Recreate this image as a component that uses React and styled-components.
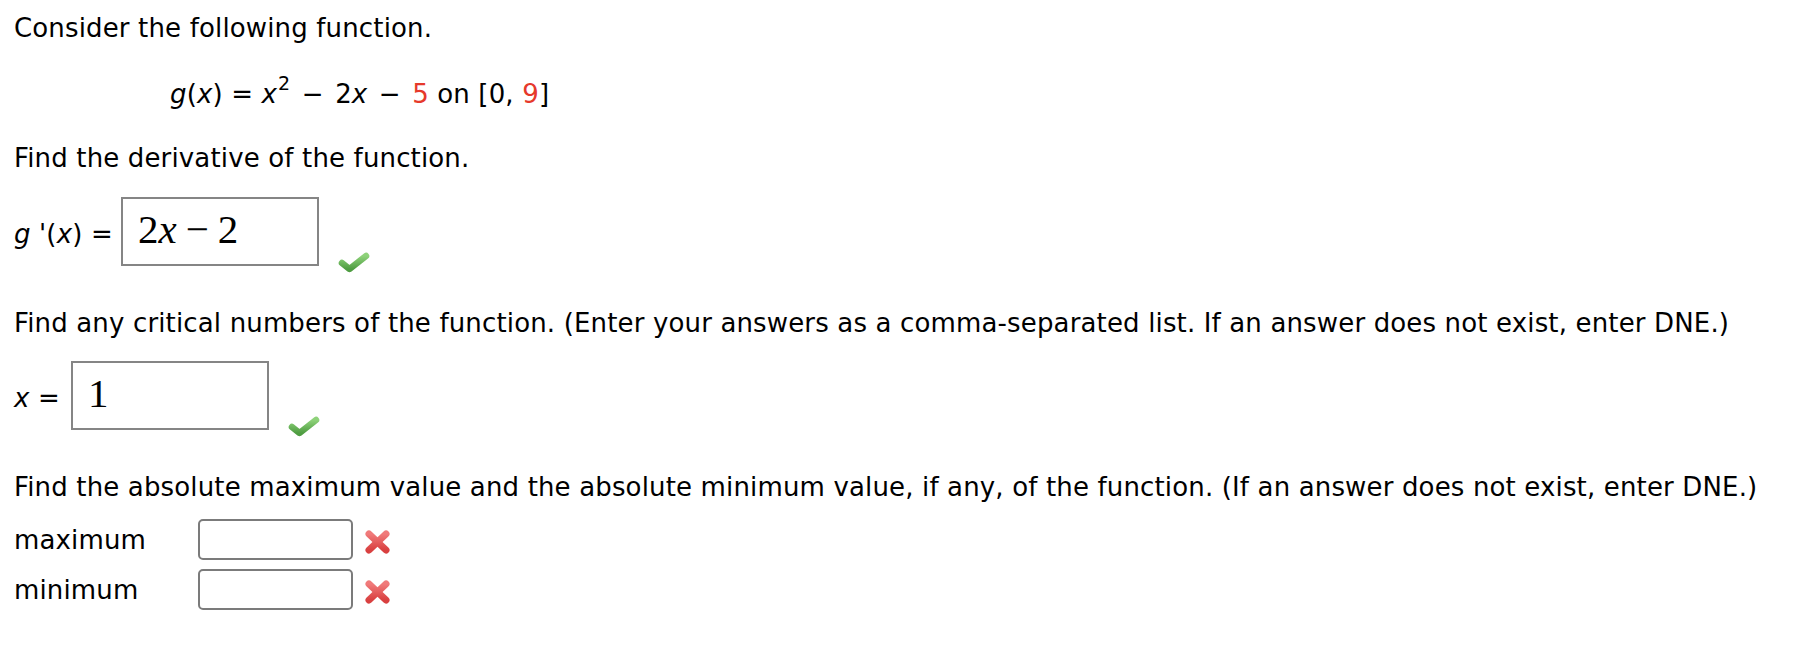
import React from 'react';
import styled, { createGlobalStyle } from 'styled-components';

const GlobalStyle = createGlobalStyle`
  html, body {
    margin: 0;
    padding: 0;
    background: #fff;
  }
`;

const Page = styled.div`
  padding: 13px 0 0 14px;
  font-family: "DejaVu Sans", Verdana, sans-serif;
  font-size: 26px;
  line-height: 30px;
  letter-spacing: 0.15px;
  color: #000;
`;

const Prompt = styled.p`
  margin: ${({ $top }) => $top || 0}px 0 0 ${({ $indent }) => $indent || 0}px;
  white-space: nowrap;
`;

const Var = styled.i`
  font-style: italic;
`;

const Red = styled.span`
  color: #e6392b;
`;

const Sup = styled.sup`
  font-size: 19px;
  line-height: 0;
  vertical-align: 13px;
  margin-left: 1px;
`;

const Minus = styled.span`
  margin: 0 3px;
`;

const AnswerRow = styled.div`
  display: flex;
  align-items: ${({ $center }) => ($center ? 'center' : 'baseline')};
  margin-top: ${({ $top }) => $top || 0}px;
  height: ${({ $height }) => $height}px;
`;

const Label = styled.span`
  flex: none;
  width: ${({ $width }) => $width}px;
  white-space: nowrap;
`;

const MathBox = styled.div`
  box-sizing: border-box;
  flex: none;
  width: ${({ $width }) => $width}px;
  height: 69px;
  padding: 8px 0 0 15px;
  border: 2px solid #858585;
  background: #fff;
  font-family: "Liberation Serif", "Times New Roman", serif;
  font-size: 41px;
  line-height: 45px;
  letter-spacing: 0;
`;

const MathVar = styled.span`
  font-style: italic;
`;

const MathOp = styled.span`
  margin: 0 9px;
`;

const Field = styled.div`
  box-sizing: border-box;
  flex: none;
  width: 155px;
  height: 41px;
  border: 2px solid #7b7b7b;
  border-radius: 5px;
  background: #fff;
`;

const Mark = styled.span`
  flex: none;
  display: block;
  line-height: 0;
  margin-left: ${({ $left }) => $left}px;
  align-self: ${({ $end }) => ($end ? 'flex-end' : 'center')};
  margin-bottom: ${({ $end }) => ($end ? -7 : 0)}px;
  margin-top: ${({ $end }) => ($end ? 0 : 4)}px;
`;

function CheckIcon() {
  return (
    <svg width="32" height="21" viewBox="0 0 32 21">
      <defs>
        <linearGradient id="chk" x1="0" y1="0" x2="0" y2="1">
          <stop offset="0" stopColor="#8ed27a" />
          <stop offset="1" stopColor="#4f9d42" />
        </linearGradient>
      </defs>
      <path
        d="M4 11 L11.5 17 L28 4"
        fill="none"
        stroke="url(#chk)"
        strokeWidth="6.5"
        strokeLinecap="round"
        strokeLinejoin="round"
      />
    </svg>
  );
}

function CrossIcon() {
  return (
    <svg width="29" height="26" viewBox="0 0 29 26">
      <defs>
        <linearGradient id="crs" x1="0" y1="0" x2="0" y2="1">
          <stop offset="0" stopColor="#f07a7a" />
          <stop offset="1" stopColor="#d94040" />
        </linearGradient>
      </defs>
      <g stroke="url(#crs)" strokeWidth="7" strokeLinecap="round" fill="none">
        <path d="M6 5 L23 21" />
        <path d="M23 5 L6 21" />
      </g>
    </svg>
  );
}

export default function App() {
  return (
    <>
      <GlobalStyle />
      <Page>
        <Prompt>Consider the following function.</Prompt>
        <Prompt $top={36} $indent={156}>
          <Var>g</Var>(<Var>x</Var>) = <Var>x</Var>
          <Sup>2</Sup> <Minus>−</Minus> 2<Var>x</Var> <Minus>−</Minus>{' '}
          <Red>5</Red> on [0, <Red>9</Red>]
        </Prompt>

        <Prompt $top={34}>Find the derivative of the function.</Prompt>
        <AnswerRow $top={24} $height={69}>
          <Label $width={107}>
            <Var>g</Var> '(<Var>x</Var>) =
          </Label>
          <MathBox $width={198}>
            2<MathVar>x</MathVar>
            <MathOp>−</MathOp>2
          </MathBox>
          <Mark $left={19} $end>
            <CheckIcon />
          </Mark>
        </AnswerRow>

        <Prompt $top={42}>
          Find any critical numbers of the function. (Enter your answers as a
          comma-separated list. If an answer does not exist, enter DNE.)
        </Prompt>
        <AnswerRow $top={23} $height={69}>
          <Label $width={57}>
            <Var>x</Var> =
          </Label>
          <MathBox $width={198}>1</MathBox>
          <Mark $left={19} $end>
            <CheckIcon />
          </Mark>
        </AnswerRow>

        <Prompt $top={42}>
          Find the absolute maximum value and the absolute minimum value, if
          any, of the function. (If an answer does not exist, enter DNE.)
        </Prompt>
        <AnswerRow $top={17} $height={41} $center>
          <Label $width={184}>maximum</Label>
          <Field />
          <Mark $left={10}>
            <CrossIcon />
          </Mark>
        </AnswerRow>
        <AnswerRow $top={9} $height={41} $center>
          <Label $width={184}>minimum</Label>
          <Field />
          <Mark $left={10}>
            <CrossIcon />
          </Mark>
        </AnswerRow>
      </Page>
    </>
  );
}
